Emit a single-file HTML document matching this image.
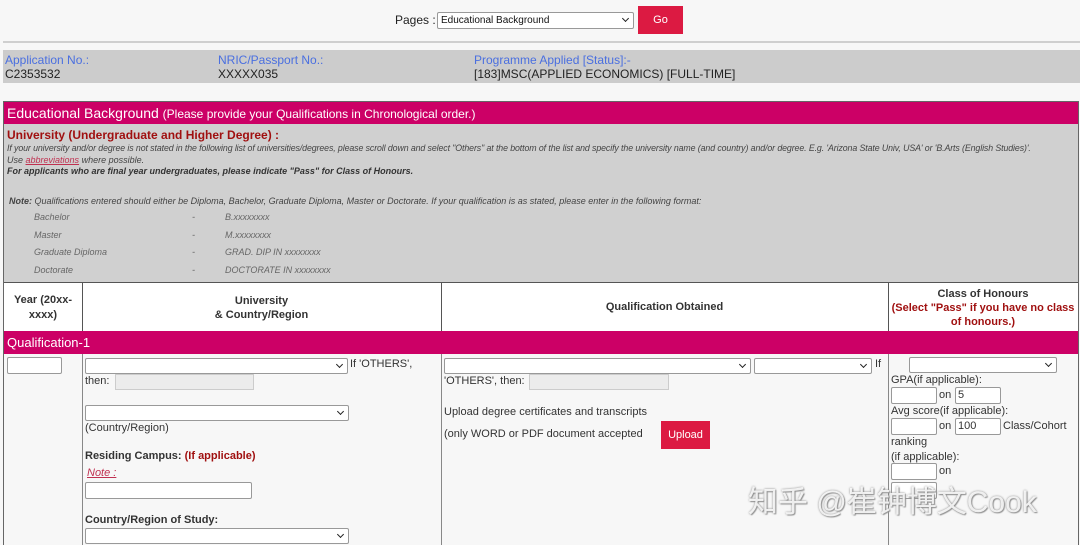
<!DOCTYPE html>
<html><head><meta charset="utf-8"><style>
*{box-sizing:border-box;margin:0;padding:0}
body{width:1080px;height:545px;overflow:hidden;background:#f7f7f7;font-family:"Liberation Sans",sans-serif;color:#333;position:relative}
.a{position:absolute;white-space:nowrap}
.sel{position:absolute;background:#fff;border:1px solid #999;border-radius:2px;height:16px}
.sel:after{content:"";position:absolute;right:5px;top:3px;width:4px;height:4px;border-right:1.5px solid #222;border-bottom:1.5px solid #222;transform:rotate(45deg)}
.inp{position:absolute;background:#fff;border:1px solid #999;border-radius:2px;height:17px}
.dis{position:absolute;background:#ececec;border:1px solid #ccc;height:16px}
.btn{position:absolute;background:#dc1a42;color:#fff;text-align:center;font-size:11px}
.s11{font-size:11px}.s12{font-size:12px}
.it{font-style:italic;font-size:9px;color:#444}
.mag{position:absolute;background:#cc0066;color:#fff}
.vl{position:absolute;width:1px;background:#555}
.red{color:#a01010}
</style></head><body>
<div class="a s12" style="left:395px;top:13px;color:#222">Pages :</div>
<div class="sel" style="left:437px;top:12px;width:197px;height:17px"><span class="a" style="left:3px;top:2px;font-size:10px;color:#111">Educational Background</span></div>
<div class="btn" style="left:638px;top:6px;width:45px;height:28px;line-height:28px">Go</div>
<div class="a" style="left:3px;top:41px;width:1077px;height:2px;background:#cfcfcf"></div>

<div class="a" style="left:3px;top:50px;width:1077px;height:33px;background:#cccccc"></div>
<div class="a s12" style="left:5px;top:53px;color:#4a6fe0">Application No.:</div>
<div class="a s12" style="left:5px;top:67px;color:#222">C2353532</div>
<div class="a s12" style="left:218px;top:53px;color:#4a6fe0">NRIC/Passport No.:</div>
<div class="a s12" style="left:218px;top:67px;color:#222">XXXXX035</div>
<div class="a s12" style="left:474px;top:53px;color:#4a6fe0">Programme Applied [Status]:-</div>
<div class="a s12" style="left:474px;top:67px;color:#222">[183]MSC(APPLIED ECONOMICS) [FULL-TIME]</div>

<div class="a" style="left:3px;top:101px;width:1076px;height:444px;border:1px solid #666;border-bottom:none"></div>
<div class="mag" style="left:4px;top:102px;width:1074px;height:22px"><span class="a" style="left:3px;top:3px;font-size:14px">Educational Background <span style="font-size:12px">(Please provide your Qualifications in Chronological order.)</span></span></div>
<div class="a" style="left:4px;top:124px;width:1074px;height:158px;background:#d0d0d0"></div>
<div class="a s12 red" style="left:7px;top:128px;font-weight:bold">University (Undergraduate and Higher Degree) :</div>
<div class="a it" style="left:7px;top:143px;font-size:8.8px;letter-spacing:-0.1px">If your university and/or degree is not stated in the following list of universities/degrees, please scroll down and select "Others" at the bottom of the list and specify the university name (and country) and/or degree. E.g. 'Arizona State Univ, USA' or 'B.Arts (English Studies)'.</div>
<div class="a it" style="left:7px;top:155px">Use <span style="color:#c03050;text-decoration:underline">abbreviations</span> where possible.</div>
<div class="a it" style="left:7px;top:166px;font-weight:bold;color:#333">For applicants who are final year undergraduates, please indicate "Pass" for Class of Honours.</div>
<div class="a it" style="left:9px;top:196px"><b>Note:</b> Qualifications entered should either be Diploma, Bachelor, Graduate Diploma, Master or Doctorate. If your qualification is as stated, please enter in the following format:</div>
<div class="a it" style="left:34px;top:212px;color:#666">Bachelor</div><div class="a it" style="left:192px;top:212px;color:#666">-</div><div class="a it" style="left:225px;top:212px;color:#666">B.xxxxxxxx</div>
<div class="a it" style="left:34px;top:230px;color:#666">Master</div><div class="a it" style="left:192px;top:230px;color:#666">-</div><div class="a it" style="left:225px;top:230px;color:#666">M.xxxxxxxx</div>
<div class="a it" style="left:34px;top:247px;color:#666">Graduate Diploma</div><div class="a it" style="left:192px;top:247px;color:#666">-</div><div class="a it" style="left:225px;top:247px;color:#666">GRAD. DIP IN xxxxxxxx</div>
<div class="a it" style="left:34px;top:265px;color:#666">Doctorate</div><div class="a it" style="left:192px;top:265px;color:#666">-</div><div class="a it" style="left:225px;top:265px;color:#666">DOCTORATE IN xxxxxxxx</div>

<div class="a" style="left:4px;top:282px;width:1074px;height:49px;background:#fff;border-top:1px solid #555"></div>
<div class="vl" style="left:82px;top:282px;height:49px"></div>
<div class="vl" style="left:441px;top:282px;height:49px"></div>
<div class="vl" style="left:888px;top:282px;height:49px"></div>
<div class="a s11" style="left:4px;top:293px;width:78px;text-align:center;font-weight:bold;white-space:normal;line-height:15px">Year (20xx-xxxx)</div>
<div class="a s11" style="left:82px;top:294px;width:359px;text-align:center;font-weight:bold;line-height:14px">University<br>&amp; Country/Region</div>
<div class="a s11" style="left:441px;top:301px;width:447px;text-align:center;font-weight:bold">Qualification Obtained</div>
<div class="a s11" style="left:888px;top:287px;width:190px;text-align:center;font-weight:bold;line-height:14px">Class of Honours<br><span class="red">(Select "Pass" if you have no class<br>of honours.)</span></div>

<div class="mag" style="left:4px;top:331px;width:1074px;height:23px"><span class="a" style="left:3px;top:4px;font-size:13px">Qualification-1</span></div>
<div class="vl" style="left:82px;top:354px;height:191px;background:#888"></div>
<div class="vl" style="left:441px;top:354px;height:191px;background:#888"></div>
<div class="vl" style="left:888px;top:354px;height:191px;background:#888"></div>

<div class="inp" style="left:7px;top:357px;width:55px"></div>
<div class="sel" style="left:85px;top:358px;width:263px"></div>
<div class="a s11" style="left:350px;top:358px">If 'OTHERS',</div>
<div class="a s11" style="left:85px;top:375px">then:</div>
<div class="dis" style="left:115px;top:374px;width:139px"></div>
<div class="sel" style="left:85px;top:405px;width:264px"></div>
<div class="a s11" style="left:85px;top:422px">(Country/Region)</div>
<div class="a s11" style="left:85px;top:450px;font-weight:bold">Residing Campus: <span class="red">(If applicable)</span></div>
<div class="a s11" style="left:87px;top:467px;color:#c03050;font-style:italic;text-decoration:underline">Note :</div>
<div class="inp" style="left:85px;top:482px;width:167px"></div>
<div class="a s11" style="left:85px;top:514px;font-weight:bold">Country/Region of Study:</div>
<div class="sel" style="left:85px;top:528px;width:264px"></div>

<div class="sel" style="left:444px;top:358px;width:307px"></div>
<div class="sel" style="left:754px;top:358px;width:118px"></div>
<div class="a s11" style="left:875px;top:358px">If</div>
<div class="a s11" style="left:444px;top:375px">'OTHERS', then:</div>
<div class="dis" style="left:529px;top:374px;width:140px"></div>
<div class="a s11" style="left:444px;top:406px">Upload degree certificates and transcripts</div>
<div class="a s11" style="left:444px;top:428px">(only WORD or PDF document accepted</div>
<div class="btn" style="left:661px;top:421px;width:49px;height:28px;line-height:28px">Upload</div>

<div class="sel" style="left:909px;top:357px;width:148px"></div>
<div class="a s11" style="left:891px;top:374px">GPA(if applicable):</div>
<div class="inp" style="left:891px;top:387px;width:46px"></div><div class="a s11" style="left:939px;top:389px">on</div><div class="inp" style="left:955px;top:387px;width:46px"><span class="a s11" style="left:2px;top:1px">5</span></div>
<div class="a s11" style="left:891px;top:405px">Avg score(if applicable):</div>
<div class="inp" style="left:891px;top:418px;width:46px"></div><div class="a s11" style="left:939px;top:420px">on</div><div class="inp" style="left:955px;top:418px;width:46px"><span class="a s11" style="left:2px;top:1px">100</span></div>
<div class="a s11" style="left:1003px;top:420px">Class/Cohort</div>
<div class="a s11" style="left:891px;top:436px">ranking</div>
<div class="a s11" style="left:891px;top:451px">(if applicable):</div>
<div class="inp" style="left:891px;top:463px;width:46px"></div><div class="a s11" style="left:939px;top:465px">on</div>
<div class="inp" style="left:891px;top:482px;width:46px"></div>
<div class="a" style="left:748px;top:477px;font-size:30px;color:rgba(255,255,255,0.85);text-shadow:0 0 2px #888,1px 1px 1px #999;font-family:'Liberation Sans','Noto Sans CJK SC',sans-serif">知乎 @崔钟博文Cook</div>
</body></html>
